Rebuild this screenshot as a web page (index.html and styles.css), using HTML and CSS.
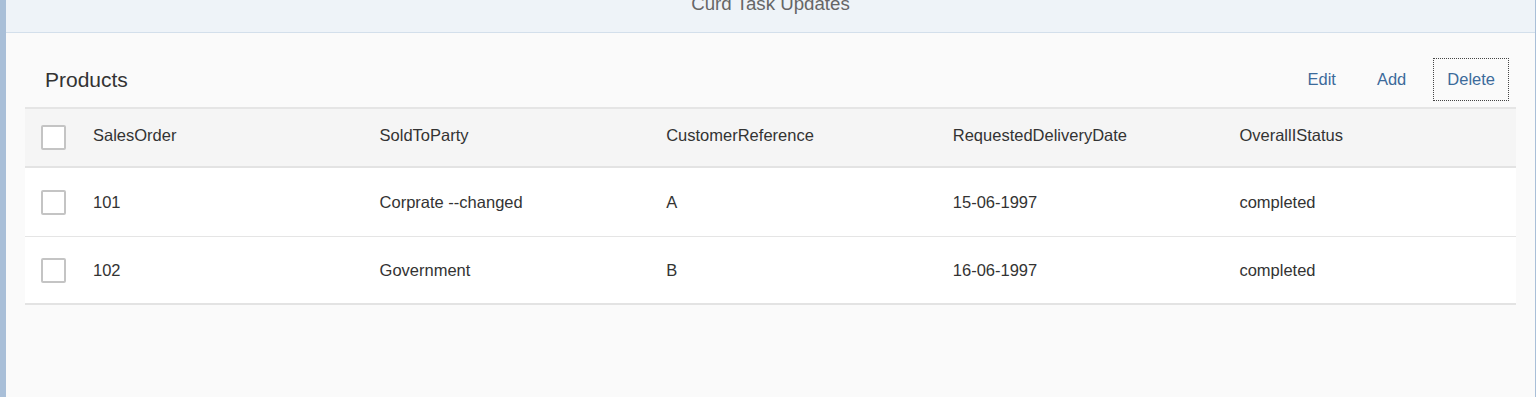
FILE: index.html
```html
<!DOCTYPE html>
<html>
<head>
<meta charset="utf-8">
<link rel="stylesheet" href="styles.css">
</head>
<body>
<div class="app">
  <header class="shell">
    <div class="shell-title">Curd Task Updates</div>
  </header>
  <main class="content">
    <div class="toolbar">
      <div class="title">Products</div>
      <div class="actions">
        <button class="btn">Edit</button>
        <button class="btn">Add</button>
        <button class="btn focused">Delete</button>
      </div>
    </div>
    <div class="table">
      <div class="row head">
        <div class="cell sel"><span class="cb"></span></div>
        <div class="cell">SalesOrder</div>
        <div class="cell">SoldToParty</div>
        <div class="cell">CustomerReference</div>
        <div class="cell">RequestedDeliveryDate</div>
        <div class="cell">OverallIStatus</div>
      </div>
      <div class="row item">
        <div class="cell sel"><span class="cb"></span></div>
        <div class="cell">101</div>
        <div class="cell">Corprate --changed</div>
        <div class="cell">A</div>
        <div class="cell">15-06-1997</div>
        <div class="cell">completed</div>
      </div>
      <div class="row item last">
        <div class="cell sel"><span class="cb"></span></div>
        <div class="cell">102</div>
        <div class="cell">Government</div>
        <div class="cell">B</div>
        <div class="cell">16-06-1997</div>
        <div class="cell">completed</div>
      </div>
    </div>
  </main>
</div>
</body>
</html>
```
FILE: styles.css
```css
html, body {
  margin: 0;
  padding: 0;
  height: 100%;
}
body {
  background: #a9bfd8;
  font-family: "Liberation Sans", Arial, sans-serif;
  color: #333333;
  overflow: hidden;
}
.app {
  margin: 0 1px 0 6px;
  height: 100%;
  background: #fafafa;
  display: flex;
  flex-direction: column;
}
.shell {
  height: 32px;
  background: #eef3f8;
  border-bottom: 1px solid #d3dfeb;
  overflow: hidden;
  display: flex;
  justify-content: center;
}
.shell-title {
  font-size: 18.7px;
  line-height: 20px;
  margin-top: -6.5px;
  color: #666666;
}
.content {
  padding: 25px 19px 0 19px;
}
.toolbar {
  height: 43px;
  margin-bottom: 6px;
  display: flex;
  align-items: center;
  justify-content: space-between;
  padding: 0 7px 0 20px;
}
.title {
  font-size: 21px;
  color: #333333;
}
.actions {
  display: flex;
  gap: 13px;
  height: 43px;
}
.btn {
  font-family: "Liberation Sans", Arial, sans-serif;
  font-size: 16.5px;
  color: #3c6a9a;
  background: transparent;
  border: 1px solid transparent;
  padding: 0 13px;
  height: 43px;
  cursor: pointer;
}
.btn.focused {
  border: 1px dotted #444444;
}
.table {
  border-top: 2px solid #e5e5e5;
  background: #ffffff;
}
.row {
  display: grid;
  grid-template-columns: 56px repeat(4, 286.6px) 1fr;
  align-items: center;
  font-size: 16.5px;
}
.row.head {
  height: 57px;
  background: #f5f5f5;
  border-bottom: 2px solid #e3e3e3;
}
.row.head .cell {
  padding-bottom: 5px;
}
.row.head .cell.sel {
  padding-bottom: 0;
}
.row.item {
  height: 68px;
  border-bottom: 1px solid #e5e5e5;
}
.row.item.last {
  height: 66px;
  border-bottom: 2px solid #e3e3e3;
}
.cell {
  padding-left: 12px;
  white-space: nowrap;
}
.cell.sel {
  padding-left: 16px;
  display: flex;
  align-items: center;
}
.cb {
  display: block;
  width: 21px;
  height: 21px;
  border: 2px solid #c4c4c4;
  border-radius: 2px;
  background: #ffffff;
}
```
